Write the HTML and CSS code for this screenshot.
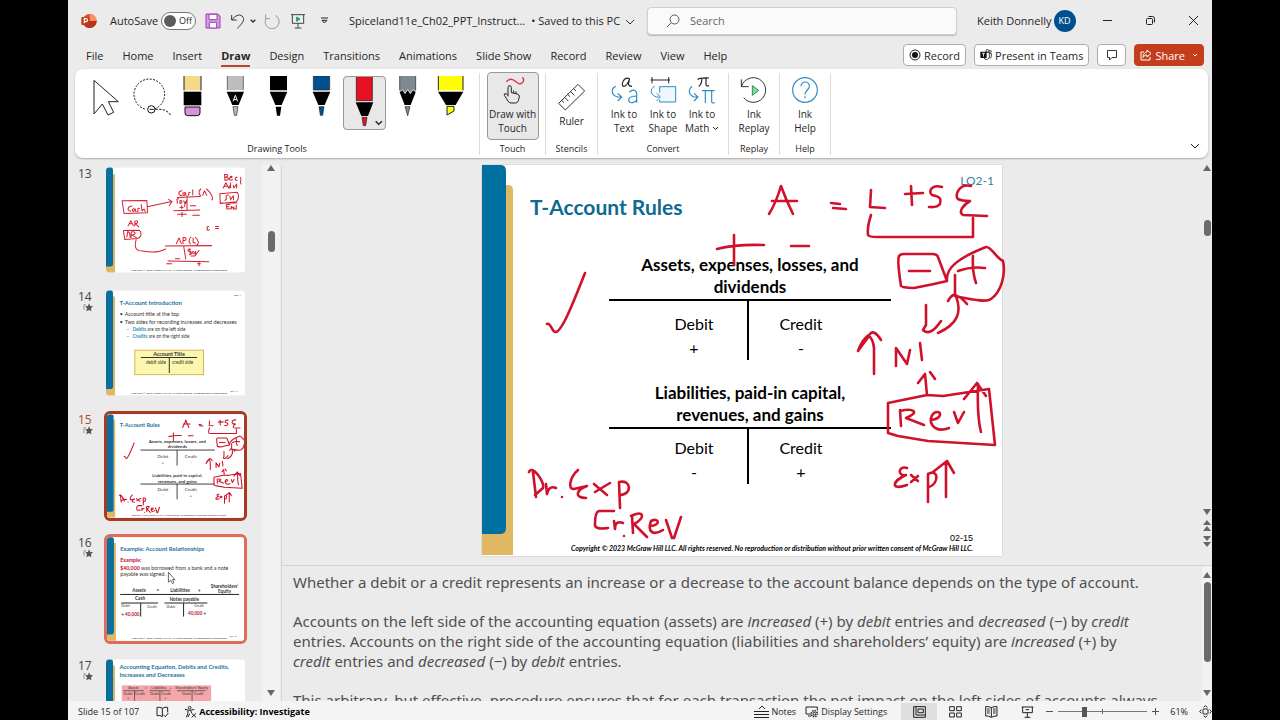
FILE: index.html
```html
<!DOCTYPE html>
<html lang="en">
<head>
<meta charset="utf-8">
<title>Spiceland11e_Ch02_PPT_Instructor - PowerPoint</title>
<link rel="stylesheet" href="styles.css">
</head>
<body>
<div class="app">
  <header class="titlebar">
    <div class="titlebar-left">
      <svg class="logo" width="16" height="16" viewBox="0 0 48 48"><circle cx="26" cy="24" r="21" fill="#d35230"/><path d="M26 3a21 21 0 0 1 21 21H26z" fill="#ff8f6b"/><path d="M5 24h42a21 21 0 0 1-42 0z" fill="#b7341b"/><rect x="1" y="12" width="24" height="24" rx="3" fill="#c13b1b"/><path d="M10 31V17h5a4.500 4.500 0 0 1 0 9h-5" fill="none" stroke="#fff" stroke-width="3.500"/></svg>
      <label class="autosave" for="autosave">AutoSave</label>
      <span class="switch"><input type="checkbox" id="autosave"><span class="switch-text">Off</span></span>
      <button class="tool save" aria-label="Save"><svg width="16" height="16" viewBox="0 0 48 48"><path d="M3 3h36l6 6v36H3z" fill="#d99be6" stroke="#9b3fb0" stroke-width="3"/><path d="M12 4h24v16H12zM13 28h22v17H13z" fill="#fff" stroke="#9b3fb0" stroke-width="3"/></svg></button>
      <button class="tool undo" aria-label="Undo"><svg width="26" height="16" viewBox="0 0 78 48" fill="none" stroke="#333" stroke-width="3"><path d="M5 6v15h15M5 21C16 8 27 2 36 9c10 9 4 20-14 37"/><path d="M62 20l7 7 7-7" stroke-width="4"/></svg></button>
      <button class="tool redo" aria-label="Repeat"><svg width="16" height="16" viewBox="0 0 48 48" fill="none" stroke="#999" stroke-width="3"><path d="M5 4v13h13M6 16A21 21 0 1 0 33 7"/></svg></button>
      <button class="tool" aria-label="Start from beginning"><svg width="16" height="16" viewBox="0 0 48 48" fill="none" stroke="#444" stroke-width="3"><path d="M3 5h42M7 5v26h34V5M24 31v14M14 45h20"/><path d="M20 12l10 6-10 7z" fill="#21a366" stroke="#21a366"/></svg></button>
      <button class="tool more" aria-label="Customize toolbar"><svg width="9" height="9" viewBox="0 0 27 27" fill="none" stroke="#222" stroke-width="3"><path d="M3 6h21M6 13l7 8 8-8z"/></svg></button>
      <span class="doc-name">Spiceland11e_Ch02_PPT_Instruct...</span>
      <button class="saved">• Saved to this PC <svg width="10" height="8" viewBox="0 0 10 8" fill="none" stroke="#333"><path d="M1 2l4 4 4-4"/></svg></button>
    </div>
    <div class="search">
      <svg width="14" height="14" viewBox="0 0 14 14" fill="none" stroke="#555"><circle cx="8.500" cy="5.500" r="4.500"/><path d="M5 9l-4 4"/></svg>
      <input type="search" placeholder="Search" aria-label="Search">
    </div>
    <div class="titlebar-right">
      <span>Keith Donnelly</span><span class="avatar">KD</span>
      <div class="window-buttons">
        <button aria-label="Minimize"><svg width="11" height="11" viewBox="0 0 11 11" stroke="#222" fill="none"><path d="M1 5.500h9"/></svg></button>
        <button aria-label="Restore"><svg width="11" height="11" viewBox="0 0 11 11" stroke="#222" fill="none"><rect x="1.500" y="3.500" width="6" height="6" rx="1"/><path d="M3.500 1.500h4a2 2 0 0 1 2 2v4"/></svg></button>
        <button aria-label="Close"><svg width="11" height="11" viewBox="0 0 11 11" stroke="#222" fill="none"><path d="M1 1l9 9M10 1l-9 9"/></svg></button>
      </div>
    </div>
  </header>

  <div class="menubar">
    <nav class="tabs">
      <button>File</button><button>Home</button><button>Insert</button><button class="active">Draw</button><button>Design</button><button>Transitions</button><button>Animations</button><button>Slide Show</button><button>Record</button><button>Review</button><button>View</button><button>Help</button>
    </nav>
    <div class="actions">
      <button class="action"><svg width="12" height="12" viewBox="0 0 12 12"><circle cx="6" cy="6" r="5" fill="none" stroke="#222"/><circle cx="6" cy="6" r="3" fill="#111"/></svg>Record</button>
      <button class="action"><svg width="12" height="12" viewBox="0 0 36 36"><path d="M14 10h14v14a9 9 0 0 1-14 6z" fill="#fff" stroke="#222" stroke-width="2.500"/><path d="M28 13h6v9a5 5 0 0 1-6 5" fill="none" stroke="#222" stroke-width="2.500"/><circle cx="22" cy="5" r="4" fill="none" stroke="#222" stroke-width="2.500"/><circle cx="31" cy="7" r="3" fill="none" stroke="#222" stroke-width="2.500"/><rect x="1" y="8" width="19" height="19" rx="2" fill="#111"/><path d="M6 13h9M10.500 13v10" stroke="#fff" stroke-width="2.500"/></svg>Present in Teams</button>
      <button class="action comment" aria-label="Comments"><svg width="12" height="12" viewBox="0 0 12 12" fill="none" stroke="#333"><path d="M1.500 1.500h9v7H6L3.500 11V8.500h-2z"/></svg></button>
      <button class="action share"><svg width="12" height="12" viewBox="0 0 12 12" fill="none" stroke="#fff"><path d="M4 3H1v8h9V8M7 1l4 3.500L7 8V6C5 6 4 7 3 8.500 3 5 5 3 7 3z"/></svg>Share<svg class="share-more" width="6" height="5" viewBox="0 0 6 5" fill="none" stroke="#fff"><path d="M1 1l2 2 2-2"/></svg></button>
    </div>
  </div>

  <section class="ribbon">
    <div class="group drawing">
      <div class="tools">
        <button aria-label="Select"><svg viewBox="0 0 129 162" fill="#fff" stroke="#222" stroke-width="3"><path d="M27 13v101l25-30 17 33 17-8-16-32h30z"/></svg></button>
        <button aria-label="Lasso select"><svg viewBox="0 0 129 162" fill="none" stroke="#111" stroke-width="3"><path d="M50 99a46 46 0 1 1 28 0" stroke-dasharray="6 4"/><circle cx="70" cy="100" r="11"/><path d="M65 100h12"/><path d="M82 100c26-2 38 5 46 18" stroke-dasharray="7 4"/></svg></button>
        <button aria-label="Eraser"><svg viewBox="0 0 129 162"><path d="M39 0h51v43H39z" fill="#f5d98b"/><path d="M39 0v43M90 0v43" stroke="#222" stroke-width="3"/><path d="M38 47h53v41H38z" fill="#000"/><path d="M42 93h45v18q0 8-8 8H50q-8 0-8-8z" fill="#d893d8" stroke="#111" stroke-width="3"/></svg></button>
        <button aria-label="Action pen"><svg viewBox="0 0 129 162"><path d="M40 0h48v42H40z" fill="#bdbdbd"/><path d="M40 0v42M88 0v42" stroke="#333" stroke-width="2"/><path d="M38 47h52L74 87H55z"/><path d="M57 76l7-18 7 18M60 71h8" fill="none" stroke="#fff" stroke-width="3"/><path d="M57 92h15l-4 26h-7z" fill="#bbb" stroke="#222" stroke-width="2"/></svg></button>
        <button aria-label="Black pen"><svg viewBox="0 0 129 162"><path d="M39 0h51v43H39zM38 47h53L74 87H55zM56 92h17l-4 27h-9z"/></svg></button>
        <button aria-label="Blue pen"><svg viewBox="0 0 129 162"><path d="M40 0h49v42H40z" fill="#00508f" stroke="#222" stroke-width="2"/><path d="M38 47h53L74 87H55z"/><path d="M57 92h15l-4 26h-7z" fill="#00508f" stroke="#222" stroke-width="2"/></svg></button>
        <button class="selected" aria-label="Red pen"><svg viewBox="0 0 129 162"><path d="M40 0h48v74H40z" fill="#e81123" stroke="#111" stroke-width="2"/><path d="M38 79h53l-16 41H55z"/><path d="M57 124h15l-4 25h-7z" fill="#e81123" stroke="#222" stroke-width="2"/><path d="M98 136l9 9 10-9" fill="none" stroke="#222" stroke-width="4"/></svg></button>
        <button aria-label="Pencil"><svg viewBox="0 0 129 162"><path d="M41 0h48v48l-8-8-8 10-8-10-8 10-8-10-8 8z" fill="#7d8b90"/><path d="M41 0v42M89 0v42" stroke="#222" stroke-width="2"/><path d="M41 49l8-6 8 11 8-11 8 11 8-11 8 6-15 38H56z"/><path d="M57 92h15l-7 27z" fill="#888" stroke="#222" stroke-width="2"/></svg></button>
        <button aria-label="Highlighter"><svg viewBox="0 0 129 162"><path d="M28 0h74v43H28z" fill="#ff0"/><path d="M28 0v43M102 0v43" stroke="#222" stroke-width="3"/><path d="M27 47h76L80 87H51z"/><path d="M54 91h21v14l-21 12z" fill="#ff0" stroke="#222" stroke-width="3"/></svg></button>
      </div>
      <span class="group-name">Drawing Tools</span>
    </div>
    <div class="group touch">
      <div class="commands"><button class="command pressed"><svg viewBox="0 0 84 84" fill="none" stroke="#222" stroke-width="3"><path d="M22 17C38 2 46 14 56 21c12 7 24-7 14-17" stroke="#e03040" stroke-width="4"/><path d="M27 61V35q0-7 6-6 4 1 4 6v15l18 4q7 2 6 9l-3 11q-2 7-9 7H36q-6 0-9-6L16 58q-2-6 5-5l6 5M44 51v-8M51 53v-7"/></svg>Draw with<br>Touch</button></div>
      <span class="group-name">Touch</span>
    </div>
    <div class="group stencils">
      <div class="commands"><button class="command"><svg viewBox="0 0 84 84" fill="none" stroke="#333" stroke-width="3"><path d="M60 4L2 61l20 20 58-57zM47 17l7 7M38 26l11 11M29 34l7 7M20 43l11 11M11 52l7 7"/></svg>Ruler</button></div>
      <span class="group-name">Stencils</span>
    </div>
    <div class="group convert">
      <div class="commands">
        <button class="command"><svg viewBox="0 0 84 84" fill="none" stroke="#2b8bc6" stroke-width="3.500"><path d="M59 8C39 0 31 32 42 31c9-1 14-15 17-23-5 18-6 22 7 23" stroke="#222"/><path d="M17 31C4 36 1 56 23 63h11M23 52l12 11-12 12M58 48c13-10 22-5 22 6v26M80 60c-13 0-24 2-24 12 0 14 24 8 24-3"/></svg>Ink to<br>Text</button>
        <button class="command"><svg viewBox="0 0 84 84" fill="none" stroke="#2b8bc6" stroke-width="3"><path d="M5 12h58M9 3v19M59 3v19" stroke="#222"/><path d="M17 31C4 36 1 56 23 63h11M23 52l12 11-12 12"/><path d="M32 50V32h48v46H32V72" fill="#dceffa" fill-opacity=".5"/></svg>Ink to<br>Shape</button>
        <button class="command"><svg viewBox="0 0 84 84" fill="none" stroke="#2b8bc6" stroke-width="3.500"><path d="M29 11q5-6 34-5M42 7c-1 15-4 22-10 24M54 7v19q1 6 9 3" stroke="#222"/><path d="M12 31C0 40 1 56 18 63h11M18 52l12 11-12 12M42 44h38M52 44v37M71 44v34q2 4 9 2"/></svg>Ink to<br>Math <svg class="caret" width="7" height="5" viewBox="0 0 7 5" fill="none" stroke="#222"><path d="M1 1l2.500 2.500L6 1"/></svg></button>
      </div>
      <span class="group-name">Convert</span>
    </div>
    <div class="group replay">
      <div class="commands"><button class="command"><svg viewBox="0 0 84 84" fill="none" stroke="#333" stroke-width="3"><path d="M4 10v22h22M5 30A37 37 0 1 1 11 65"/><path d="M37 29l19 14-19 15z" fill="#8ed8a0" stroke="#219653"/></svg>Ink<br>Replay</button></div>
      <span class="group-name">Replay</span>
    </div>
    <div class="group help">
      <div class="commands"><button class="command"><svg viewBox="0 0 84 84" fill="none" stroke="#2b8bc6" stroke-width="3.500"><circle cx="42" cy="42" r="37"/><path d="M30 31c1-19 27-16 25 1-1 10-13 11-13 24M42 61v6"/></svg>Ink<br>Help</button></div>
      <span class="group-name">Help</span>
    </div>
    <button class="collapse" aria-label="Collapse ribbon"><svg width="10" height="7" viewBox="0 0 10 7" fill="none" stroke="#222"><path d="M1 1l4 4 4-4"/></svg></button>
  </section>

  <main class="workspace">
    <aside class="slides-panel">
      <ol class="slides">
        <li><div class="slide-no">13</div>
          <svg class="thumb" viewBox="115 20 415 313"><rect x="115" y="20" width="415" height="313" fill="#fff"/><path d="M115 40h27v293h-27z" fill="#e0b763"/><path d="M115 20h15q6 0 6 7v281q0 7-6 7h-15z" fill="#0a6f9f"/>
            <g fill="none" stroke="#d4202f" stroke-width="3" stroke-linecap="round" stroke-linejoin="round"><path d="M163 119l6 38 70-2-2-37zM192 135c-14 2-15 15-3 15M198 143c-6 0-6 8 0 8l4-8 2 8M215 142c-10-2 0 8-7 10M220 130l3 20c5-10 8-6 9 2M238 137l73-16M301 115l11 6-8 12"/><path d="M342 89c-12 0-13 15 0 15M350 95c-7-2-8 8-1 8l3-8 2 8M366 94c-9 1 0 8-6 9M374 86v16M398 84c-8 6-6 18 0 20M404 103l5-14 7 14M415 84c8 6 23 25 16 33M328 109l68-3M357 106v39M317 149l78-2M332 113c-13 1 2 10-5 13M336 118v9c8 0 7-12 0-8M347 119l3 8 6-9-7 18M336 139h9M341 134v9M367 134h16M329 159h26M342 153v13M374 162h20"/><path d="M181 194l8-15 8 15M185 188h9M201 194v-14c12-4 10 9 1 7l11 10M167 208l4 27 38-3c12-4 14-19 5-25zM177 228l3-17c6 2 7 10 7 17M190 229v-17c16-3 15 8 2 9l14 8M205 235c-7 25 0 34 20 34 26 5 50 4 68-6M292 254l138-1M347 255l6 38M325 247l8-17 7 17M345 247v-18c12-2 11 9 2 9M368 228c-8 8-7 13-1 20M375 230v13l7 3M382 228c12 13 11 19 2 25M365 263l1 15M367 264c-9-4-10 9 0 7 9 1 3 9-3 9M376 270c-6 2-1 8 3 5l4-5-2 13 12-16M369 284h10M322 292h13M300 299l122 2M296 307h15M388 307h9M393 300v13"/><path d="M469 40l1 18c15-1 13-9 1-9 12-3 9-9-2-9M487 50c8-1 4-7-1-2-5 7-1 12 7 8M506 48c-8 3-7 11 1 10M516 49c8 8-5 8 2 20M465 81l8-16 8 16M468 76h9M485 74c-5 4-2 9 2 6v-14M495 73l2 8 8-12v12M455 98l1 29 48-5c8-8 9-20 3-28zM481 102c-18 3 2 10-11 16M485 105l2 11 8-12 1 12M456 126h50M474 130h11M475 131l1 13 10-1M474 137h8M489 144v-8l8 8v-8M504 132v12h-6M422 196c-12 1-1 7-5 9 1 3 5 3 7 0M442 196h9M442 202h9"/></g><text x="192" y="330" class="tiny-copy">Copyright © 2023 McGraw Hill LLC. All rights reserved. No reproduction or distribution.</text>
          </svg></li>
        <li><div class="slide-no">14<svg class="star" width="10" height="9" viewBox="0 0 30 27"><path d="M18 1l4 8 8 1-6 6 1 9-7-4-8 4 2-9-5-6 8-1z" fill="#555"/><path d="M1 6h8M0 12h5M1 18h5" stroke="#555" stroke-width="2"/></svg></div>
          <svg class="thumb" viewBox="115 390 415 313"><rect x="115" y="390" width="415" height="313" fill="#fff"/><path d="M115 408h27v295h-27z" fill="#e0b763"/><path d="M115 390h15q6 0 6 7v280q0 7-6 7h-15z" fill="#0a6f9f"/><text x="155" y="432" class="tt">T-Account Introduction</text><g class="body"><text x="156" y="466">•</text><text x="171" y="466">Account title at the top</text><text x="156" y="489">•</text><text x="171" y="489">Two sides for recording increases and decreases</text><text x="176" y="511" class="mini"><tspan>–</tspan><tspan x="194" class="link">Debits</tspan> are on the left side</text><text x="176" y="532" class="mini">–<tspan x="194" class="link">Credits</tspan> are on the right side</text></g><rect x="201" y="568" width="205" height="73" fill="#fcf7af" stroke="#d8b45b" stroke-width="3"/><path d="M219 590h168M304 590v46" stroke="#333" stroke-width="3"/><text x="303" y="586" class="body bold mid">Account Title</text><text x="264" y="609" class="mini mid">debit side</text><text x="344" y="609" class="mini mid">credit side</text><text x="192" y="700" class="tiny-copy">Copyright © 2023 McGraw Hill LLC. All rights reserved. No reproduction or distribution.</text><text x="487" y="694" class="tiny-copy">02-14</text><text x="497" y="405" class="tiny-copy">LO2-1</text></svg></li>
        <li class="current"><div class="slide-no">15<svg class="star" width="10" height="9" viewBox="0 0 30 27"><path d="M18 1l4 8 8 1-6 6 1 9-7-4-8 4 2-9-5-6 8-1z" fill="#555"/><path d="M1 6h8M0 12h5M1 18h5" stroke="#555" stroke-width="2"/></svg></div>
          <svg class="thumb" viewBox="481 165 520 391"><rect x="481" y="165" width="520" height="391" fill="#fff"/><path d="M481 185h31v371h-31z" fill="#e0b763"/><path d="M481 165h19q6 0 6 7v355q0 7-6 7h-19z" fill="#0a6f9f"/><g class="full"><text x="529" y="214" class="full-title">T-Account Rules</text><g class="bold mid"><text x="748" y="272">Assets, expenses, losses, and</text><text x="748" y="294">dividends</text><text x="748" y="401">Liabilities, paid-in capital,</text><text x="748" y="424">revenues, and gains</text></g><path d="M608 300h282M747 300v59M608 429h282M747 429v58" stroke="#111" stroke-width="3"/><g class="mid"><text x="693" y="330">Debit</text><text x="693" y="354">+</text><text x="799" y="330">Credit</text><text x="799" y="354">-</text><text x="693" y="454">Debit</text><text x="693" y="476">-</text><text x="799" y="454">Credit</text><text x="799" y="477">+</text></g><text x="575" y="552" class="full-copy">Copyright © 2023 McGraw Hill LLC. All rights reserved. No reproduction or distribution without prior consent.</text></g><use href="#ink" stroke-width="4"/></svg></li>
        <li class="hovered"><div class="slide-no">16<svg class="star" width="10" height="9" viewBox="0 0 30 27"><path d="M18 1l4 8 8 1-6 6 1 9-7-4-8 4 2-9-5-6 8-1z" fill="#555"/><path d="M1 6h8M0 12h5M1 18h5" stroke="#555" stroke-width="2"/></svg></div>
          <svg class="thumb" viewBox="115 410 415 313"><rect x="115" y="410" width="415" height="313" fill="#fff"/><path d="M115 427h27v296h-27z" fill="#e0b763"/><path d="M115 410h15q6 0 6 7v280q0 7-6 7h-15z" fill="#0a6f9f"/><text x="155" y="450" class="tt">Example: Account Relationships</text><g class="body"><text x="155" y="485" class="red">Example:</text><text x="155" y="508"><tspan class="red">$40,000</tspan> was borrowed from a bank and a note</text><text x="155" y="528">payable was signed.</text></g><path d="M155 583h360M158 609h112M217 609v41M289 609h130M347 609v41" stroke="#222" stroke-width="3"/><g class="mini bold mid"><text x="212" y="577">Assets</text><text x="269" y="577">=</text><text x="336" y="577">Liabilities</text><text x="395" y="577">+</text><text x="471" y="563">Shareholders’</text><text x="471" y="580">Equity</text><text x="215" y="600">Cash</text><text x="349" y="602">Notes payable</text><text x="186" y="647"><tspan>+ </tspan><tspan class="red">40,000</tspan></text><text x="388" y="645"><tspan class="red">40,000</tspan> +</text></g><g class="small"><text x="158" y="622">Debit</text><text x="236" y="625">Credit</text><text x="295" y="624">Debit</text><text x="379" y="622">Credit</text></g><text x="192" y="718" class="tiny-copy">Copyright © 2023 McGraw Hill LLC. All rights reserved. No reproduction or distribution.</text><text x="487" y="712" class="tiny-copy">02-16</text><path d="M301 516v30l7-6 5 10 5-3-5-9h8z" fill="#fff" stroke="#222" stroke-width="2"/></svg></li>
        <li><div class="slide-no">17<svg class="star" width="10" height="9" viewBox="0 0 30 27"><path d="M18 1l4 8 8 1-6 6 1 9-7-4-8 4 2-9-5-6 8-1z" fill="#555"/><path d="M1 6h8M0 12h5M1 18h5" stroke="#555" stroke-width="2"/></svg></div>
          <svg class="thumb" viewBox="115 780 415 313"><rect x="115" y="780" width="415" height="313" fill="#fff"/><path d="M115 798h27v295h-27z" fill="#e0b763"/><path d="M115 780h15q6 0 6 7v306h-21z" fill="#0a6f9f"/><text x="155" y="808" class="tt">Accounting Equation, Debits and Credits,</text><text x="155" y="832" class="tt">Increases and Decreases</text><rect x="162" y="857" width="267" height="80" fill="#f4a6a9"/><path d="M166 873h62M200 873v40M245 873h62M276 873v40M327 873h85M372 873v40" stroke="#333" stroke-width="2"/><g class="small mid"><text x="197" y="869">Assets</text><text x="233" y="869">=</text><text x="273" y="869">Liabilities</text><text x="308" y="869">+</text><text x="371" y="869">Shareholders’ Equity</text><text x="181" y="886">Debit</text><text x="216" y="886">Credit</text><text x="260" y="886">Debit</text><text x="294" y="886">Credit</text><text x="355" y="886">Debit</text><text x="391" y="886">Credit</text><text x="181" y="898">+</text><text x="214" y="898">-</text><text x="261" y="898">-</text><text x="292" y="898">+</text></g></svg></li>
      </ol>
      <div class="scrollbar list-scroll"><svg width="8" height="6" viewBox="0 0 8 6"><path d="M4 0l4 6H0z"/></svg><i></i><svg width="8" height="6" viewBox="0 0 8 6"><path d="M0 0h8L4 6z"/></svg></div>
    </aside>

    <div class="editor">
      <div class="stage">
        <div class="stage-center">
          <article class="slide">
            <svg class="slide-edge" viewBox="0 0 32 391" preserveAspectRatio="none"><path d="M0 20h26q5 0 5 5v365H0z" fill="#e0b763"/><path d="M0 0h19q5 0 5 6v357q0 6-6 6H0z" fill="#0070a0"/></svg>
            <div class="lo">LO2-1</div>
            <h1>T-Account Rules</h1>
            <table class="t-account"><caption>Assets, expenses, losses, and<br>dividends</caption><tbody><tr><td>Debit</td><td>Credit</td></tr><tr><td>+</td><td>-</td></tr></tbody></table>
            <table class="t-account lower"><caption>Liabilities, paid-in capital,<br>revenues, and gains</caption><tbody><tr><td>Debit</td><td>Credit</td></tr><tr><td>-</td><td>+</td></tr></tbody></table>
            <footer><div class="page-no">02-15</div><div class="copyright">Copyright © 2023 McGraw Hill LLC. All rights reserved. No reproduction or distribution without prior written consent of McGraw Hill LLC.</div></footer>
            <svg class="ink" viewBox="481 165 520 391" stroke-width="2.600"><g id="ink" fill="none" stroke="#d0112b" stroke-linecap="round" stroke-linejoin="round">
              <path d="M768 214q7-11 12-28 5 14 12 28M771 201h25M830 203l9 1M832 208l13 1M870 190l-1 17 15 1M870 215q-4 12-3 20 1 2 9 2h96v-19M910 186l1 19M904 194l18-1M941 187c-11-3-14 5-10 8 10 2 9 5 8 9-3 4-8 3-11 3M970 186c-12-3-17 10-13 13 4 2 8 2 12 2-7 4-12 11-7 14l24 1"/>
              <path d="M716 249q19-5 47-4M733 235v30M790 246h18M900 286q-4-26-2-30 2-2 4-2h29q5 0 6 3l9 24q-12 3-33 7-6 0-11-1M908 271h21M946 280c-1-12 11-22 39-33 5-1 9 10 17 14 3 14-2 31-12 38-5 4-20 0-32-2M972 256q-1 15 3 27M957 271q14-5 27-3M954 275v21M947 301q5-9 9-5 4 1 10 8M955 296c6 16 2 28-18 37M925 305v20l-3 5q7 7 18-9"/>
              <path d="M857 351q4-12 12-17 4-5 11 6M857 351l11-15q4 3 5 12v26M895 366v-18l11 16 3-14M919 343l2 17M917 383l7-9 2 21M929 372l5 7M887 403l39-8 16 1 46-7 6 56-67-4-30-5-10-3zM899 410l1 16M899 411c13-3 21 1 6 7l18 7M930 420c12-1 11-11 3-7-8 7-1 21 15 15M953 412l4 11 6-11M963 399l13-16 9 13M977 384q-1 33 3 48M906 468c-9-3-10 9-1 7-14 6-16 16 1 10M910 475l7 6M910 482l7-6M927 474v28M927 474c11-6 11 10 1 13M932 472l14-11 7 12M945 462v35"/>
              <path d="M532 472l3 25M528 472c3-8 16 10 14 16l-8 7M545 484l1 10q2-9 9-6M561 497v0M577 470c-9 8-10 20-4 19l13-3c-11 4-13 12-1 12M593 484l13 11M609 483l-15 9M618 482l1 26M618 482c13-3 13 13 1 13M613 511h-15q-4 1-4 13-1 6 13 4M613 521l1 8q0-9 8-6M623 536v0M631 516l1 17M630 516c13-7 15 2 3 8l13 13M650 526c10-1 8-9 0-5-4 11 2 15 12 9M665 520l6 18h2l7-21M546 324c4-2 5 9 9 8 7-2 19-34 29-59"/>
            </g></svg>
          </article>
        </div>
        <div class="scrollbar stage-scroll"><svg width="8" height="6" viewBox="0 0 8 6"><path d="M4 0l4 6H0z"/></svg><i></i><svg width="8" height="6" viewBox="0 0 8 6"><path d="M0 0h8L4 6z"/></svg><svg width="10" height="11" viewBox="0 0 10 11"><path d="M5 0l4 5H1zM5 6l4 5H1z"/></svg><svg width="10" height="11" viewBox="0 0 10 11"><path d="M5 5l4-5H1zM5 11l4-5H1z"/></svg></div>
      </div>
      <section class="notes">
        <div class="notes-text">
          <p>Whether a debit or a credit represents an increase or a decrease to the account balance depends on the type of account.</p>
          <p>Accounts on the left side of the accounting equation (assets) are <em>increased</em> (+) by <em>debit</em> entries and <em>decreased</em> (−) by <em>credit</em><br>entries. Accounts on the right side of the accounting equation (liabilities and shareholders’ equity) are <em>increased</em> (+) by<br><em>credit</em> entries and <em>decreased</em> (−) by <em>debit</em> entries.</p>
          <p>This arbitrary, but effective, procedure ensures that for each transaction the net impact on the left sides of accounts always</p>
        </div>
        <div class="scrollbar notes-scroll"><svg width="8" height="6" viewBox="0 0 8 6"><path d="M4 0l4 6H0z"/></svg><i></i><svg width="8" height="6" viewBox="0 0 8 6"><path d="M0 0h8L4 6z"/></svg></div>
      </section>
    </div>
  </main>

  <footer class="status">
    <span class="count">Slide 15 of 107</span>
    <button aria-label="Spelling"><svg width="13" height="12" viewBox="0 0 39 36" fill="none" stroke="#222" stroke-width="3"><path d="M19 7Q12 2 3 4v25q9-2 16 3M19 7q7-5 16-3v15M19 7v25M22 26l6 6 9-11"/></svg></button>
    <button class="access"><svg width="13" height="12" viewBox="0 0 39 36" fill="none" stroke="#222" stroke-width="3"><circle cx="17" cy="5" r="4"/><path d="M3 10q14 7 28 0M12 14q1 9-5 20M21 14q0 4 2 7M17 23l-5 10M23 22l13 12M36 22L23 34"/></svg>Accessibility: Investigate</button>
    <span class="spacer"></span>
    <button class="st-notes"><svg width="15" height="14" viewBox="0 0 15 14" fill="none" stroke="#222"><path d="M5 4l3-3 3 3M0 6.500h15M0 9.500h15M0 12.500h15"/></svg>Notes</button>
    <button class="st-display"><svg width="14" height="12" viewBox="0 0 42 36" fill="none" stroke="#222" stroke-width="3"><path d="M17 24H3V3h34v10M9 30h9"/><circle cx="28" cy="23" r="9" stroke-dasharray="4 3" stroke-width="5"/><circle cx="28" cy="23" r="4"/></svg>Display Settings</button>
    <div class="views">
      <button class="on" aria-label="Normal"><svg width="13" height="12" viewBox="0 0 39 36" fill="none" stroke="#222" stroke-width="3"><path d="M2 2h35v32H2zM9 2v25M9 27h28M15 9h16v11H15z"/></svg></button>
      <button aria-label="Slide sorter"><svg width="13" height="12" viewBox="0 0 39 36" fill="none" stroke="#222" stroke-width="3"><path d="M2 2h14v12H2zM23 2h14v12H23zM2 21h14v12H2zM23 21h14v12H23z"/></svg></button>
      <button aria-label="Reading view"><svg width="13" height="12" viewBox="0 0 39 36" fill="none" stroke="#222" stroke-width="3"><path d="M19 5Q11 0 2 2v28q9-1 17 4 8-5 17-4V2q-9-2-17 3v29M6 9h8M6 15h8M6 21h8M24 9h8M24 15h8M24 21h8"/></svg></button>
      <button aria-label="Slide show"><svg width="13" height="12" viewBox="0 0 39 36" fill="none" stroke="#222" stroke-width="3"><path d="M2 3h35M5 3v17h29V3M14 11h10M19 20v13M11 34h17"/></svg></button>
    </div>
    <button aria-label="Zoom out"><svg width="9" height="9" viewBox="0 0 9 9" stroke="#555"><path d="M1 4.500h7"/></svg></button>
    <input class="zoom" type="range" min="0" max="100" value="28" aria-label="Zoom">
    <button aria-label="Zoom in"><svg width="9" height="9" viewBox="0 0 9 9" stroke="#555"><path d="M1 4.500h7M4.500 1v7"/></svg></button>
    <span class="percent">61%</span>
    <button class="fit" aria-label="Fit slide"><svg width="13" height="13" viewBox="0 0 39 39" fill="none" stroke="#222" stroke-width="3"><rect x="12" y="12" width="15" height="15" rx="2"/><path d="M14 7l5-5 6 5M14 32l5 5 6-5M7 14l-5 5 5 6M32 14l5 5-5 6"/></svg></button>
  </footer>
</div>
</body>
</html>
```
FILE: styles.css
```css
* { box-sizing: border-box; }
body { margin: 0; padding: 0 68px; background: #000; font-family: "Open Sans", "Noto Sans", sans-serif; font-size: 11px; color: #262626; }
button { margin: 0; padding: 0; border: 0; background: none; font: inherit; color: inherit; white-space: nowrap; }
svg { flex: none; }
.app { display: flex; flex-direction: column; height: 100vh; overflow: hidden; background: #ebebeb; }

.titlebar { display: grid; grid-template-columns: 579fr 310fr 255fr; align-items: center; height: 41px; flex: none; }
.titlebar-left { display: flex; align-items: center; padding-left: 13px; min-width: 0; white-space: nowrap; }
.tool { display: flex; margin-right: 10px; }
.autosave { margin: 0 3px 0 13px; }
.switch { display: flex; align-items: center; width: 35px; height: 18px; margin-right: 9px; border: 1px solid #777; border-radius: 9px; background: #fff; }
.switch input { appearance: none; width: 12px; height: 12px; margin: 0 0 0 2px; border-radius: 50%; background: #5c5c5c; }
.switch-text { margin-left: 3px; font-size: 9px; }
.undo { margin-right: 8px; }
.more { margin: 0 20px 0 4px; }
.doc-name { margin-right: 6px; }
.tool.save { margin-right: 9px; }
.saved svg { margin-left: 2px; vertical-align: middle; }
.search { display: flex; align-items: center; height: 28px; padding-left: 18px; background: #fafafa; border: 1px solid #cfcfcf; border-radius: 4px; box-shadow: 0 1px 1px #bbb; }
.search input { flex: 1; min-width: 0; margin-left: 10px; padding: 0; border: 0; background: none; font: inherit; }
.search input::placeholder { color: #666; }
.titlebar-right { display: flex; align-items: center; padding-left: 20px; white-space: nowrap; }
.avatar { display: grid; place-items: center; width: 22px; height: 22px; margin-left: 2px; border-radius: 50%; background: #00508f; color: #fff; font-size: 9px; }
.window-buttons { display: flex; flex: 1; justify-content: flex-end; gap: 32px; padding-right: 13px; }
.window-buttons button { display: flex; }

.menubar { display: flex; justify-content: space-between; align-items: center; height: 28px; padding: 0 8px 0 18px; flex: none; }
.tabs { display: flex; gap: 19px; padding-top: 3px; }
.tabs button { height: 21px; border-bottom: 2px solid transparent; line-height: 18px; }
.tabs .active { border-color: #b7472a; font-weight: 700; }
.actions { display: flex; gap: 8px; }
.action { display: flex; align-items: center; gap: 3px; height: 22px; padding: 0 5px; border: 1px solid #adadad; border-radius: 4px; background: #fff; }
.comment { width: 29px; justify-content: center; }
.share { background: #c43e1c; border-color: #c43e1c; color: #fff; }
.share-more { margin-left: 4px; }

.ribbon { display: flex; flex: none; height: 89px; margin: 0 4px 0 7px; background: #fff; border-radius: 8px; box-shadow: 0 1px 2px #aaa; }
.group { display: flex; flex-direction: column; align-items: center; justify-content: space-between; margin: 4px 0 3px; border-right: 1px solid #dcdcdc; }
.group-name { font-size: 9px; line-height: 12px; }
.drawing { width: 405px; }
.tools { display: flex; align-self: flex-start; padding: 3px 0 0 10px; }
.tools button { display: flex; width: 43px; height: 54px; border-radius: 4px; }
.tools svg { width: 43px; height: 54px; }
.tools .selected { background: #e8e8e8; outline: 1px solid #999; outline-offset: -1px; }
.touch { width: 66px; }
.stencils { width: 52px; }
.convert { width: 131px; }
.replay, .help { width: 51px; }
.commands { display: flex; }
.command { display: flex; flex-direction: column; display: block; width: 39px; height: 66px; line-height: 14px; font-size: 10px; text-align: center; }
.command > svg:first-child { display: block; width: 28px; height: 28px; margin: 2px auto 3px; }
.command { padding-bottom: 4px; }
.touch .command { width: 52px; }
.command.pressed { height: 68px; margin-top: -1px; border: 1px solid #999; border-radius: 4px; background: #e8e8e8; }
.command .caret { vertical-align: middle; }
.collapse { align-self: flex-end; margin: 0 8px 5px auto; }

.workspace { display: flex; flex: 1; min-height: 0; margin-top: 7px; }
.slides-panel { display: flex; width: 213px; flex: none; overflow: hidden; }
.slides { flex: 1; margin: 0; padding: 0; list-style: none; }
.slides li { display: flex; height: 109px; margin-bottom: 14px; }
.slide-no { width: 36px; padding: 0 0 0 10px; font-size: 12px; line-height: 17px; color: #444; }
.current .slide-no { color: #b7472a; }
.star { display: block; margin: -2px 0 0 5px; }
.thumb { width: 143px; height: 110px; border: 2px solid transparent; border-radius: 6px; overflow: hidden; }
.current .thumb { border: 3px solid #a83b1e; }
.hovered .thumb { border: 3px solid #df6c58; }
.thumb text { font-family: Lato, "Open Sans", sans-serif; font-size: 16px; fill: #333; }
.thumb .tt { font-size: 18px; font-weight: 700; fill: #1d7399; }
.thumb .mini, .thumb .mini text { font-size: 14px; }
.thumb .small text { font-size: 11px; }
.thumb .mid, .thumb .mid text { text-anchor: middle; }
.thumb .bold, .thumb .bold text { font-weight: 700; }
.thumb .red { fill: #c3142d; font-weight: 700; }
.thumb .link { fill: #2090c0; font-weight: 700; }
.thumb .tiny-copy { font-size: 8px; font-style: italic; }
.thumb .full text { font-size: 17px; }
.thumb .full .full-title { font-size: 21px; font-weight: 700; fill: #1d7399; }
.thumb .full .full-copy { font-size: 8px; font-style: italic; }
.scrollbar { display: flex; flex-direction: column; align-items: center; flex: none; fill: #666; }
.scrollbar i { width: 7px; border-radius: 4px; background: #6b6b6b; }
.list-scroll { width: 18px; margin-right: 1px; padding: 0 0 5px; background: #f2f2f2; }
.list-scroll i { height: 21px; margin: 60px 0 auto; }

.editor { display: flex; flex-direction: column; flex: 1; min-width: 0; border-left: 1px solid #d6d6d6; }
.stage { display: flex; flex: 1; min-height: 0; }
.stage-center { display: flex; flex: 1; justify-content: center; align-items: flex-start; }
.slide { position: relative; display: flex; flex-direction: column; width: 520px; height: 391px; padding: 8px 8px 0 48px; background: #fff; box-shadow: 0 0 1px #999; color: #000; font-family: Lato, "Open Sans", sans-serif; }
.slide-edge { position: absolute; left: 0; top: 0; width: 32px; height: 100%; }
.ink { position: absolute; inset: 0; width: 100%; height: 100%; overflow: visible; }
.lo { align-self: flex-end; font-size: 12px; line-height: 16px; color: #3a7f9c; }
.slide h1 { margin: 5px 0 34px; font-size: 21px; line-height: 26px; color: #0f6a91; }
.t-account { width: 282px; margin: 0 0 22px 79px; border-collapse: collapse; table-layout: fixed; font-size: 16px; text-align: center; }
.t-account caption { font-size: 17px; font-weight: 700; line-height: 22px; padding-bottom: 1px; white-space: nowrap; }
.t-account td { width: 139px; padding: 0 0 0 32px; line-height: 24px; }
.t-account td + td { width: 143px; padding: 0 38px 0 0; border-left: 2px solid #000; }
.t-account tr:first-child { border-top: 2px solid #000; }
.t-account tr:first-child td { padding-top: 11px; }
.t-account.lower tr:first-child td { padding-top: 7px; }
.slide footer { margin-top: auto; padding: 0 21px 3px 0; text-align: right; }
.page-no { font: 9px/11px "Liberation Sans", sans-serif; }
.copyright { font-size: 7px; line-height: 9px; font-style: italic; font-weight: 700; white-space: nowrap; }
.stage-scroll { width: 10px; padding-bottom: 13px; }
.stage-scroll i { height: 16px; margin: 44px 0 auto; }
.stage-scroll svg { margin-bottom: 5px; }
.notes { display: flex; height: 136px; flex: none; overflow: hidden; border-top: 1px solid #d3d3d3; }
.notes-text { flex: 1; min-width: 0; padding: 6px 0 0 11px; font-family: "Noto Sans", "Open Sans", sans-serif; font-size: 15px; line-height: 20px; color: #505050; white-space: nowrap; }
.notes-text p { margin: 0 0 19px; }
.notes-scroll { width: 10px; padding: 6px 0 5px; background: #f2f2f2; }
.notes-scroll i { height: 80px; margin: 4px 0 auto; }

.status { display: flex; align-items: center; flex: none; height: 19px; padding: 2px 0 0 10px; background: #f4f4f4; font-size: 9px; white-space: nowrap; }
.status button { display: flex; align-items: center; gap: 2px; }
.count { margin-right: 17px; }
.access { margin-left: 15px; color: #000; font-weight: 700; }
.spacer { flex: 1; }
.st-display { margin-left: 9px; }
.views { display: flex; align-self: stretch; margin: 0 0 0 14px; }
.status .views button { width: 36px; justify-content: center; }
.views .on { background: #dedede; }
.zoom { appearance: none; width: 89px; height: 14px; margin: 0 4px; background: linear-gradient(#666, #666) 50% 50% / 1px 5px no-repeat, linear-gradient(#777, #777) 50% 50% / 100% 1px no-repeat; }
.zoom::-webkit-slider-thumb { appearance: none; width: 5px; height: 10px; background: #555; }
.percent { margin: 0 11px 0 10px; }
```
